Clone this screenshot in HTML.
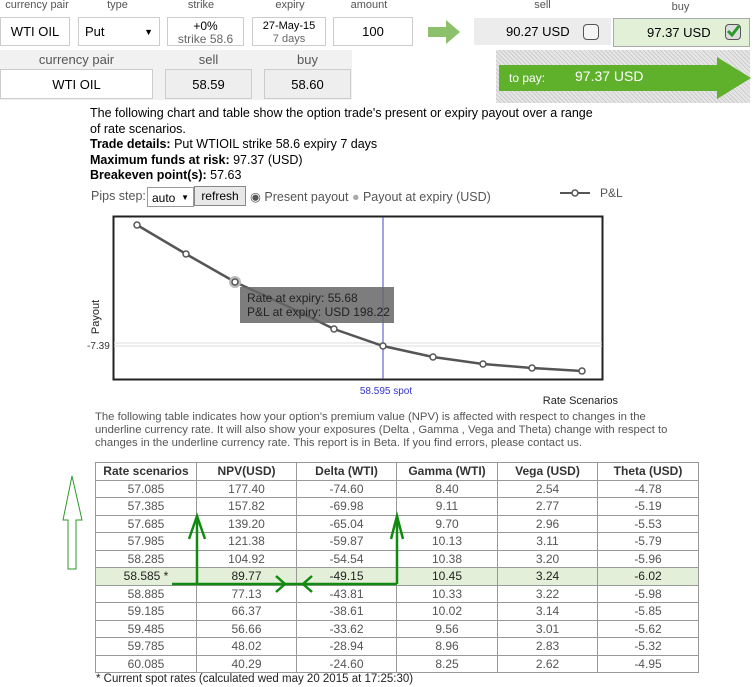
<!DOCTYPE html>
<html><head><style>
*{margin:0;padding:0;box-sizing:border-box}
body{width:754px;height:687px;background:#fff;font-family:"Liberation Sans",Arial,sans-serif;color:#000;position:relative;overflow:hidden}
.a{position:absolute}
.lbl{font-size:11px;color:#555;text-align:center}
.box{border:1px solid #ccc;background:#fff;font-size:13px;text-align:center}
.g{background:#eee;border:1px solid #ccc}
table{border-collapse:collapse;font-size:12px;color:#555;table-layout:fixed}
td,th{border:1px solid #999;text-align:center;height:17.5px;padding:0;white-space:nowrap}
th{color:#333;font-weight:bold}
tr.hl td{background:#e4efd9;color:#222}
</style></head><body>
<div class="a lbl" style="left:0;top:-1px;width:74px">currency pair</div>
<div class="a lbl" style="left:80px;top:-1px;width:75px">type</div>
<div class="a lbl" style="left:160px;top:-1px;width:82px">strike</div>
<div class="a lbl" style="left:255px;top:-1px;width:70px">expiry</div>
<div class="a lbl" style="left:334px;top:-1px;width:70px">amount</div>
<div class="a box" style="left:0;top:17px;width:70px;height:29px;line-height:28px">WTI OIL</div>
<div class="a box" style="left:78px;top:17px;width:82px;height:29px;line-height:28px;text-align:left;padding-left:6px">Put<span style="position:absolute;right:6px;font-size:9px">▼</span></div>
<div class="a box" style="left:167px;top:17px;width:77px;height:29px;font-size:12px;line-height:13px;padding-top:2px">+0%<br><span style="color:#666">strike 58.6</span></div>
<div class="a box" style="left:252px;top:17px;width:74px;height:29px;font-size:11px;line-height:13px;padding-top:2px">27-May-15<br><span style="color:#666">7 days</span></div>
<div class="a box" style="left:333px;top:17px;width:80px;height:29px;line-height:28px">100</div>
<svg class="a" style="left:428px;top:20px" width="34" height="24"><polygon points="0,7 18,7 18,0 32,12 18,24 18,17 0,17" fill="#8cc06a"/></svg>
<div class="a lbl" style="left:475px;top:-1px;width:135px">sell</div>
<div class="a lbl" style="left:613px;top:1px;width:135px">buy</div>
<div class="a" style="left:474px;top:18px;width:137px;height:27px;background:#ececec;font-size:13px;line-height:27px;padding-left:32px">90.27 USD</div>
<div class="a" style="left:583px;top:24px;width:16px;height:16px;border:1px solid #555;border-radius:4px;background:#f5f5f5"></div>
<div class="a" style="left:613px;top:18px;width:137px;height:29px;background:#e3f0d8;border:1px solid #aaa;font-size:13px;line-height:27px;padding-left:33px">97.37 USD</div>
<div class="a" style="left:725px;top:24px;width:16px;height:16px;border:1px solid #555;border-radius:4px;background:#ddd"><svg width="16" height="16" style="position:absolute;left:-1px;top:-2px"><path d="M3 8 L7 12 L14 3" stroke="#2a9a2a" stroke-width="3" fill="none"/></svg></div>
<div class="a" style="left:0;top:50px;width:352px;height:50px;background:#f1f1f1"></div>
<div class="a box" style="left:0;top:69px;width:153px;height:30px;line-height:29px">WTI OIL</div>
<div class="a box g" style="left:165px;top:69px;width:87px;height:30px;line-height:29px">58.59</div>
<div class="a box g" style="left:264px;top:69px;width:87px;height:30px;line-height:29px">58.60</div>
<div class="a lbl" style="left:0;top:52px;width:153px;font-size:13px">currency pair</div>
<div class="a lbl" style="left:165px;top:52px;width:87px;font-size:13px">sell</div>
<div class="a lbl" style="left:264px;top:52px;width:87px;font-size:13px">buy</div>
<div class="a" style="left:496px;top:50px;width:254px;height:53px;background:repeating-linear-gradient(45deg,#ccc 0 1px,#e6e6e6 1px 3px)"></div>
<svg class="a" style="left:499px;top:57px" width="254" height="42"><polygon points="0,8 218,8 218,0 252,21 218,42 218,34 0,34" fill="#5fb12b"/></svg>
<div class="a" style="left:509px;top:71px;color:#fff;font-size:12px">to pay:</div>
<div class="a" style="left:575px;top:68px;color:#fff;font-size:14px">97.37 USD</div>
<div class="a" style="left:90px;top:106px;font-size:12.5px;line-height:15.5px;width:540px">The following chart and table show the option trade's present or expiry payout over a range<br>of rate scenarios.<br><b>Trade details:</b> Put WTIOIL strike 58.6 expiry 7 days<br><b>Maximum funds at risk:</b> 97.37 (USD)<br><b>Breakeven point(s):</b> 57.63</div>
<div class="a" style="left:91px;top:189px;font-size:12.5px;color:#555">Pips step:</div>
<div class="a" style="left:147px;top:187px;width:47px;height:20px;border:1px solid #999;font-size:12px;padding:3px 4px;background:#fff">auto<span style="float:right;font-size:8px;margin-top:2px">▼</span></div>
<div class="a" style="left:194px;top:186px;width:52px;height:20px;border:1px solid #888;background:#e8e8e8;font-size:12px;text-align:center;line-height:18px">refresh</div>
<div class="a" style="left:250px;top:189px;font-size:12.5px;color:#555">◉ Present payout <span style="color:#aaa">●</span> Payout at expiry (USD)</div>
<svg class="a" style="left:560px;top:186px" width="70" height="14"><line x1="0" y1="7" x2="30" y2="7" stroke="#555" stroke-width="2"/><circle cx="15" cy="7" r="3" fill="#fff" stroke="#555" stroke-width="1.5"/><text x="40" y="11" font-size="12" fill="#555" font-family="Liberation Sans">P&amp;L</text></svg>
<svg class="a" style="left:80px;top:210px" width="540" height="200">
<rect x="33.5" y="6.5" width="489" height="163" fill="#fff" stroke="#222" stroke-width="2"/>
<line x1="34" y1="133" x2="522" y2="133" stroke="#ddd"/><line x1="34" y1="136" x2="522" y2="136" stroke="#ddd"/>
<line x1="303" y1="7" x2="303" y2="169" stroke="#44c" stroke-width="1"/>
<polyline points="57,15 106,44 155,72 205,95 254,119 303,136 353,147 403,154 452,158 502,161" fill="none" stroke="#555" stroke-width="2.5"/>
<circle cx="155" cy="72" r="6" fill="#bbb"/>
<g fill="#fff" stroke="#555" stroke-width="1.5"><circle cx="57" cy="15" r="3"/><circle cx="106" cy="44" r="3"/><circle cx="155" cy="72" r="3"/><circle cx="254" cy="119" r="3"/><circle cx="303" cy="136" r="3"/><circle cx="353" cy="147" r="3"/><circle cx="403" cy="154" r="3"/><circle cx="452" cy="158" r="3"/><circle cx="502" cy="161" r="3"/></g>
<rect x="160" y="77" width="154" height="36" fill="#666" opacity="0.85"/>
<text x="167" y="92" font-size="12" fill="#222" font-family="Liberation Sans">Rate at expiry: 55.68</text>
<text x="167" y="106" font-size="12" fill="#222" font-family="Liberation Sans">P&amp;L at expiry: USD 198.22</text>
<text x="19" y="107" font-size="11" fill="#222" font-family="Liberation Sans" transform="rotate(-90 19 107)" text-anchor="middle">Payout</text>
<text x="7" y="139" font-size="10" fill="#333" font-family="Liberation Sans">-7.39</text>
<text x="306" y="184" font-size="10" fill="#33c" font-family="Liberation Sans" text-anchor="middle">58.595 spot</text>
<text x="538" y="194" font-size="11" fill="#222" font-family="Liberation Sans" text-anchor="end">Rate Scenarios</text>
</svg>
<div class="a" style="left:95px;top:411px;font-size:11.3px;line-height:13px;color:#555;width:606px">The following table indicates how your option's premium value (NPV) is affected with respect to changes in the<br>underline currency rate. It will also show your exposures (Delta , Gamma , Vega and Theta) change with respect to<br>changes in the underline currency rate. This report is in Beta. If you find errors, please contact us.</div>
<table class="a" style="left:95px;top:462px;width:604px">
<colgroup><col style="width:101px"><col style="width:100px"><col style="width:100px"><col style="width:101px"><col style="width:100px"><col style="width:101px"></colgroup>
<tr><th>Rate scenarios</th><th>NPV(USD)</th><th>Delta (WTI)</th><th>Gamma (WTI)</th><th>Vega (USD)</th><th>Theta (USD)</th></tr>
<tr><td>57.085</td><td>177.40</td><td>-74.60</td><td>8.40</td><td>2.54</td><td>-4.78</td></tr>
<tr><td>57.385</td><td>157.82</td><td>-69.98</td><td>9.11</td><td>2.77</td><td>-5.19</td></tr>
<tr><td>57.685</td><td>139.20</td><td>-65.04</td><td>9.70</td><td>2.96</td><td>-5.53</td></tr>
<tr><td>57.985</td><td>121.38</td><td>-59.87</td><td>10.13</td><td>3.11</td><td>-5.79</td></tr>
<tr><td>58.285</td><td>104.92</td><td>-54.54</td><td>10.38</td><td>3.20</td><td>-5.96</td></tr>
<tr class="hl"><td>58.585 *</td><td>89.77</td><td>-49.15</td><td>10.45</td><td>3.24</td><td>-6.02</td></tr>
<tr><td>58.885</td><td>77.13</td><td>-43.81</td><td>10.33</td><td>3.22</td><td>-5.98</td></tr>
<tr><td>59.185</td><td>66.37</td><td>-38.61</td><td>10.02</td><td>3.14</td><td>-5.85</td></tr>
<tr><td>59.485</td><td>56.66</td><td>-33.62</td><td>9.56</td><td>3.01</td><td>-5.62</td></tr>
<tr><td>59.785</td><td>48.02</td><td>-28.94</td><td>8.96</td><td>2.83</td><td>-5.32</td></tr>
<tr><td>60.085</td><td>40.29</td><td>-24.60</td><td>8.25</td><td>2.62</td><td>-4.95</td></tr>
</table>
<div class="a" style="left:96px;top:673px;font-size:11.5px;color:#222">* Current spot rates (calculated wed may 20 2015 at 17:25:30)</div>
<svg class="a" style="left:0;top:460px" width="754" height="227">
<polygon points="72,16 82,60 76,60 76,109 68,109 68,60 63,60" fill="#fff" stroke="#2a9a2a" stroke-width="1"/>
<g stroke="#128a12" stroke-width="2.5" fill="none">
<line x1="197" y1="56" x2="197" y2="124"/><polyline points="189,79 197,56 205,79"/>
<line x1="172" y1="124" x2="397" y2="124"/>
<polyline points="276,116 285,124 276,132"/><polyline points="312,116 303,124 312,132"/>
<line x1="397" y1="56" x2="397" y2="124"/><polyline points="391,79 397,56 403,79"/>
</g>
</svg>
</body></html>
